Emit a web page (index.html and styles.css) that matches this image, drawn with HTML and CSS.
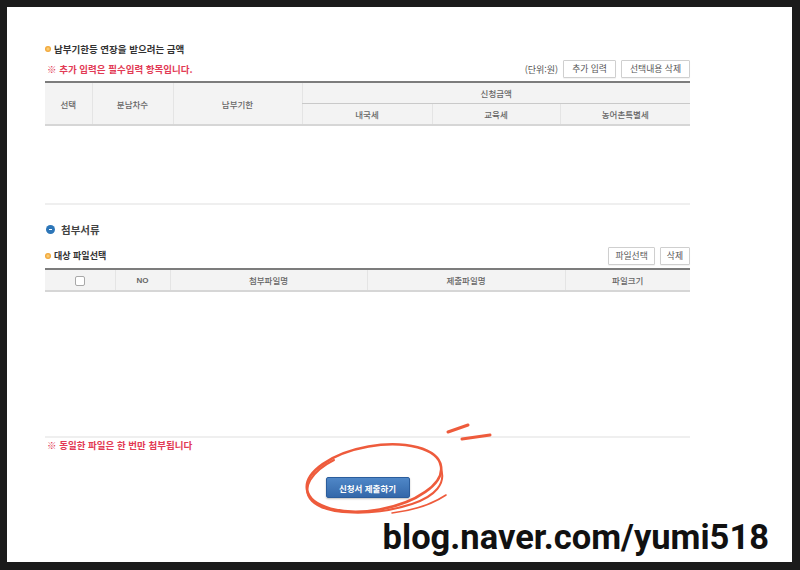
FILE: index.html
```html
<!DOCTYPE html>
<html lang="ko">
<head>
<meta charset="utf-8">
<link rel="stylesheet" href="styles.css">
</head>
<body>
<div class="frame">
  <div class="content">
    <div class="subtitle"><span class="dot"></span>납부기한등 연장을 받으려는 금액</div>
    <div class="toolbar">
      <span class="warn">※ 추가 입력은 필수입력 항목입니다.</span>
      <div class="tools">
        <span class="unit">(단위:원)</span>
        <button class="btn">추가 입력</button>
        <button class="btn">선택내용 삭제</button>
      </div>
    </div>
    <table class="grid t1">
      <colgroup>
        <col style="width:47px"><col style="width:81px"><col style="width:129px">
        <col style="width:130px"><col style="width:128px"><col style="width:130px">
      </colgroup>
      <thead>
        <tr class="r1">
          <th rowspan="2" class="first">선택</th>
          <th rowspan="2">분납차수</th>
          <th rowspan="2">납부기한</th>
          <th colspan="3" class="span">신청금액</th>
        </tr>
        <tr class="r2">
          <th>내국세</th>
          <th>교육세</th>
          <th>농어촌특별세</th>
        </tr>
      </thead>
    </table>
    <div class="empty e1"></div>
    <div class="rule"></div>

    <div class="heading"><span class="bluedot"></span>첨부서류</div>
    <div class="toolbar t2bar">
      <span class="subtitle small"><span class="dot"></span>대상 파일선택</span>
      <div class="tools">
        <button class="btn narrow">파일선택</button>
        <button class="btn narrow">삭제</button>
      </div>
    </div>
    <table class="grid t2">
      <colgroup>
        <col style="width:70px"><col style="width:55px"><col style="width:197px">
        <col style="width:198px"><col style="width:125px">
      </colgroup>
      <thead>
        <tr>
          <th class="first"><span class="check"></span></th>
          <th class="no">NO</th>
          <th>첨부파일명</th>
          <th>제출파일명</th>
          <th>파일크기</th>
        </tr>
      </thead>
    </table>
    <div class="empty e2"></div>
    <div class="rule"></div>
    <div class="warn note2">※ 동일한 파일은 한 번만 첨부됩니다</div>
    <div class="submit-row"><button class="submit">신청서 제출하기</button></div>
  </div>
  <div class="blog">blog.naver.com/yumi518</div>

  <svg class="mark" viewBox="7 7 785 555" width="785" height="555" aria-hidden="true">
    <g fill="none" stroke="#ee5b3c" stroke-linecap="round">
      <ellipse cx="374" cy="478" rx="68" ry="32" transform="rotate(-10 374 478)" stroke-width="2.6"/>
      <path d="M334 460 C312 471 300 489 312 501 C326 515 372 517 412 504 C436 496 446 483 441 469" stroke-width="2"/>
      <path d="M446 495 Q425 509 392 513" stroke-width="1.6"/>
      <path d="M448 432 L468 425" stroke-width="3"/>
      <path d="M462 439 L490 435" stroke-width="3"/>
    </g>
  </svg>
</div>
</body>
</html>
```
FILE: styles.css
```css
html, body {
  margin: 0;
  padding: 0;
}
body {
  background: #1b1b1b;
  width: 800px;
  height: 570px;
  overflow: hidden;
  font-family: "Noto Sans CJK KR", "Noto Sans", sans-serif;
}
.frame {
  position: relative;
  margin: 7px 0 0 7px;
  width: 785px;
  height: 555px;
  background: #fff;
  box-sizing: border-box;
  padding: 35px 0 0 38px;
  overflow: hidden;
}
.content {
  width: 645px;
}
.subtitle {
  display: flex;
  align-items: center;
  height: 14px;
  font-size: 9.5px;
  font-weight: 700;
  color: #333;
  line-height: 14px;
}
.subtitle.small {
  font-size: 9px;
}
.dot {
  display: inline-block;
  width: 6px;
  height: 6px;
  border-radius: 50%;
  background: radial-gradient(circle at 50% 50%, #ffd98a 0, #f2a93b 55%, #e89422 100%);
  margin-right: 3px;
  flex: none;
}
.toolbar {
  margin-top: 4px;
  height: 18px;
  display: flex;
  align-items: center;
  justify-content: space-between;
}
.warn {
  color: #e23a55;
  font-size: 9.5px;
  font-weight: 700;
  line-height: 14px;
  padding-left: 2px;
}
.tools {
  display: flex;
  align-items: center;
  gap: 5px;
}
.unit {
  font-size: 9px;
  color: #555;
}
.btn {
  height: 18px;
  padding: 0 8px;
  border: 1px solid #cfcfcf;
  background: #fff;
  font-family: inherit;
  font-size: 8.8px;
  color: #555;
  line-height: 16px;
  border-radius: 1px;
  box-shadow: 0 1px 1px rgba(0,0,0,0.05);
}
.btn.narrow {
  padding: 0 6px;
}
.grid {
  margin-top: 3px;
  width: 645px;
  border-collapse: collapse;
  table-layout: fixed;
  border-top: 2px solid #7c7c7c;
  border-bottom: 2px solid #d6d6d6;
}
.grid th {
  background: #f3f3f3;
  font-size: 8.5px;
  font-weight: 500;
  color: #666;
  padding: 0;
  border-left: 1px solid #e4e4e4;
  text-align: center;
}
.grid th.first {
  border-left: none;
}
.t1 .r1 th.span {
  height: 20px;
  border-bottom: 1px solid #c9c9c9;
}
.t1 .r2 th {
  height: 20px;
}
.t2 th {
  height: 20px;
}
.t2 th.no {
  font-family: "Liberation Sans", Arial, sans-serif;
  font-weight: 700;
  font-size: 8px;
}
.check {
  display: inline-block;
  width: 8px;
  height: 8px;
  border: 1px solid #a8a8a8;
  border-radius: 2px;
  background: #fff;
  vertical-align: middle;
}
.empty.e1 { height: 77px; }
.empty.e2 { height: 144px; }
.rule {
  height: 0;
  border-top: 2px solid #efefef;
}
.heading {
  margin-top: 16px;
  height: 16px;
  display: flex;
  align-items: center;
  font-size: 10.5px;
  font-weight: 700;
  color: #444;
}
.bluedot {
  position: relative;
  display: inline-block;
  width: 9px;
  height: 9px;
  border-radius: 50%;
  background: #2d76b8;
  margin: 0 6px 0 1px;
}
.bluedot::after {
  content: "";
  position: absolute;
  left: 3px;
  top: 4px;
  width: 3px;
  height: 1px;
  background: #fff;
}
.t2bar {
  margin-top: 10px;
}
.note2 {
  display: block;
  margin-top: 0;
  height: 14px;
}
.submit-row {
  margin-top: 25px;
  display: flex;
  justify-content: center;
}
.submit {
  width: 84px;
  height: 21px;
  border: 1px solid #2b5d9c;
  border-radius: 2px;
  background: linear-gradient(#4f87c7, #3468aa);
  color: #fff;
  font-family: inherit;
  font-size: 8.5px;
  font-weight: 700;
  padding: 0;
  box-shadow: 0 1px 2px rgba(0,0,0,0.25);
}
.blog {
  margin-top: 22px;
  padding-right: 23px;
  text-align: right;
  font-family: Roboto, "Liberation Sans", sans-serif;
  font-weight: 700;
  font-size: 34.5px;
  line-height: 34px;
  color: #111;
}
.mark {
  position: absolute;
  left: 0;
  top: 0;
  pointer-events: none;
}
```
